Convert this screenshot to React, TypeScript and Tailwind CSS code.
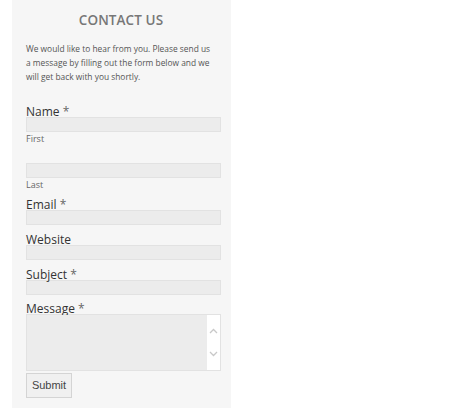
import React from 'react';

const labelCls = 'pt-[4px] text-[12px] leading-[11px] text-[#333]';

const Field = ({ label, required, hint }: { label?: string; required?: boolean; hint?: string }) => (
    <div>
        {label && (
            <div className={labelCls}>
                {label}
                {required && <span className="text-[#666]"> *</span>}
            </div>
        )}
        <div className="h-[15px] bg-[#ececec] border border-[#e2e2e2]" />
        {hint && <div className="text-[9px] leading-[12px] mt-[1px] text-[#666]">{hint}</div>}
    </div>
);

export default function App() {
    return (
        <div className="w-[474px] h-[411px] bg-white" style={{ fontFamily: '"Open Sans", sans-serif' }}>
            <div className="ml-[12px] w-[219px] h-[408px] bg-[#f6f6f6] pl-[14px] pr-[10px] pt-[11px]">
                <h1 className="text-center text-[13.5px] leading-[18px] font-semibold text-[#777] pr-[5px] tracking-[0.1px]">
                    CONTACT US
                </h1>
                <p className="mt-[13px] pr-[6px] text-[8.4px] leading-[14px] text-[#555]">
                    We would like to hear from you. Please send us a message by filling out the form below and we will get back with you shortly.
                </p>

                <div className="mt-[18px]">
                    <Field label="Name" required hint="First" />
                    <div className="mt-[18px]">
                        <Field hint="Last" />
                    </div>
                    <div className="mt-[4px]">
                        <Field label="Email" required />
                    </div>
                    <div className="mt-[5px]">
                        <Field label="Website" />
                    </div>
                    <div className="mt-[5px]">
                        <Field label="Subject" required />
                    </div>
                    <div className="mt-[4px]">
                        <div className={labelCls}>
                            Message<span className="text-[#666]"> *</span>
                        </div>
                        <div className="h-[57px] flex border border-[#e2e2e2]">
                            <div className="flex-1 bg-[#ececec]" />
                            <div className="w-[13px] bg-white flex flex-col items-center justify-around py-[4px]">
                                <svg width="9" height="6" viewBox="0 0 9 6" fill="none" stroke="#c8c8c8" strokeWidth="1.3">
                                    <path d="M1 5L4.5 1.5L8 5" />
                                </svg>
                                <svg width="9" height="6" viewBox="0 0 9 6" fill="none" stroke="#c8c8c8" strokeWidth="1.3">
                                    <path d="M1 1L4.5 4.5L8 1" />
                                </svg>
                            </div>
                        </div>
                    </div>
                    <button
                        className="w-[46px] h-[25px] bg-[#f0f0f0] border border-[#d4d4d4] text-[11px] text-[#444]"
                        style={{ fontFamily: '"Liberation Sans", Arial, sans-serif' }}
                    >
                        Submit
                    </button>
                </div>
            </div>
        </div>
    );
}
